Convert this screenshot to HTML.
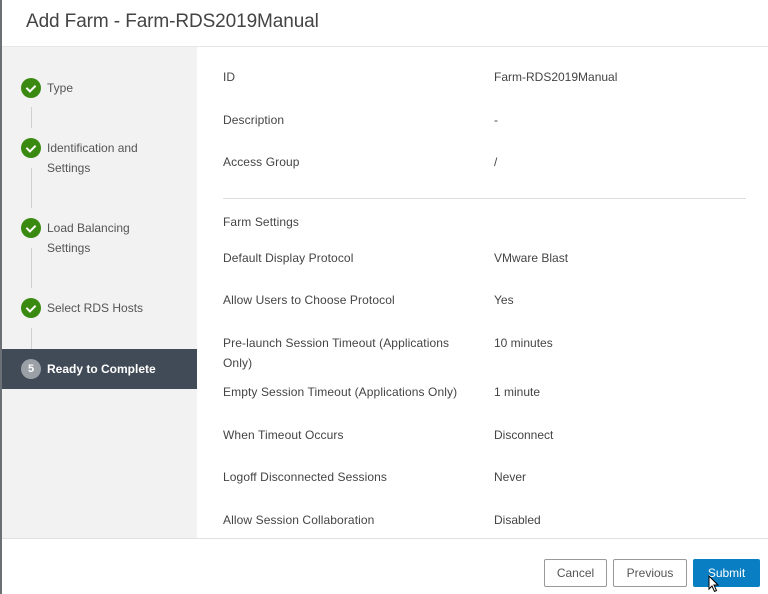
<!DOCTYPE html>
<html><head><style>
*{margin:0;padding:0;box-sizing:border-box}
body{width:768px;height:594px;overflow:hidden;background:#fff;font-family:"Liberation Sans",sans-serif;color:#444;position:relative}
.frame{position:absolute;left:0;top:0;width:768px;height:594px;border-left:2px solid #6b7077;}
.title{position:absolute;left:26px;top:11px;font-size:19px;color:#444;letter-spacing:-0.1px}
.hline{position:absolute;left:2px;right:0;top:46px;height:1px;background:#e6e6e6}
.side{position:absolute;left:2px;top:47px;width:195px;height:491px;background:#f2f2f2}
.step{position:absolute;left:47px;font-size:12px;color:#555;line-height:20px}
.chk{position:absolute;left:21px;width:20px;height:20px;border-radius:50%;background:#3a8a12}
.chk:after{content:"";position:absolute;left:7px;top:5px;width:4px;height:7px;border:solid #fff;border-width:0 2px 2px 0;transform:rotate(45deg)}
.vl{position:absolute;left:31px;width:1px;background:#d0d0d0}
.active{position:absolute;left:2px;top:349px;width:195px;height:40px;background:#414b57}
.lab{position:absolute;left:223px;font-size:12px;color:#444;line-height:20px;letter-spacing:0.1px}
.val{position:absolute;left:494px;font-size:12px;color:#444;line-height:20px}
.sep{position:absolute;left:223px;width:523px;top:198px;height:1px;background:#ddd}
.foot{position:absolute;left:2px;right:0;top:538px;height:1px;background:#e0e0e0}
.btn{position:absolute;top:559px;height:28px;border:1px solid #999;border-radius:2px;font-size:12px;color:#555;text-align:center;line-height:26px;background:#fff}
</style></head><body>
<div class="frame"></div>
<div class="title">Add Farm - Farm-RDS2019Manual</div>
<div class="hline"></div>
<div class="side"></div>
<div class="chk" style="top:78px"></div><div class="step" style="top:78px">Type</div>
<div class="vl" style="top:107px;height:21px"></div>
<div class="chk" style="top:138px"></div><div class="step" style="top:138px">Identification and<br>Settings</div>
<div class="vl" style="top:168px;height:40px"></div>
<div class="chk" style="top:218px"></div><div class="step" style="top:218px">Load Balancing<br>Settings</div>
<div class="vl" style="top:248px;height:40px"></div>
<div class="chk" style="top:298px"></div><div class="step" style="top:298px">Select RDS Hosts</div>
<div class="vl" style="top:328px;height:21px"></div>
<div class="active"></div>
<div style="position:absolute;left:21px;top:359px;width:20px;height:20px;border-radius:50%;background:#9aa0a6;color:#fff;font-size:11px;font-weight:bold;text-align:center;line-height:20px">5</div>
<div class="step" style="top:359px;color:#fff;font-weight:bold">Ready to Complete</div>

<div class="lab" style="top:67px">ID</div><div class="val" style="top:67px">Farm-RDS2019Manual</div>
<div class="lab" style="top:110px">Description</div><div class="val" style="top:110px">-</div>
<div class="lab" style="top:152px">Access Group</div><div class="val" style="top:152px">/</div>
<div class="sep"></div>
<div class="lab" style="top:212px">Farm Settings</div>
<div class="lab" style="top:248px">Default Display Protocol</div><div class="val" style="top:248px">VMware Blast</div>
<div class="lab" style="top:290px">Allow Users to Choose Protocol</div><div class="val" style="top:290px">Yes</div>
<div class="lab" style="top:333px">Pre-launch Session Timeout (Applications<br>Only)</div><div class="val" style="top:333px">10 minutes</div>
<div class="lab" style="top:382px">Empty Session Timeout (Applications Only)</div><div class="val" style="top:382px">1 minute</div>
<div class="lab" style="top:425px">When Timeout Occurs</div><div class="val" style="top:425px">Disconnect</div>
<div class="lab" style="top:467px">Logoff Disconnected Sessions</div><div class="val" style="top:467px">Never</div>
<div class="lab" style="top:510px">Allow Session Collaboration</div><div class="val" style="top:510px">Disabled</div>
<div class="foot"></div>
<div class="btn" style="left:544px;width:63px">Cancel</div>
<div class="btn" style="left:613px;width:74px">Previous</div>
<div class="btn" style="left:693px;width:67px;background:#0a7ec2;border-color:#0a7ec2;color:#fff">Submit</div>
<svg style="position:absolute;left:708px;top:575px" width="12" height="18" viewBox="0 0 12 18"><path d="M1 1 L1 14 L4 11 L6.5 16.5 L8.5 15.5 L6 10 L10 10 Z" fill="#fff" stroke="#000" stroke-width="1"/></svg>
</body></html>
